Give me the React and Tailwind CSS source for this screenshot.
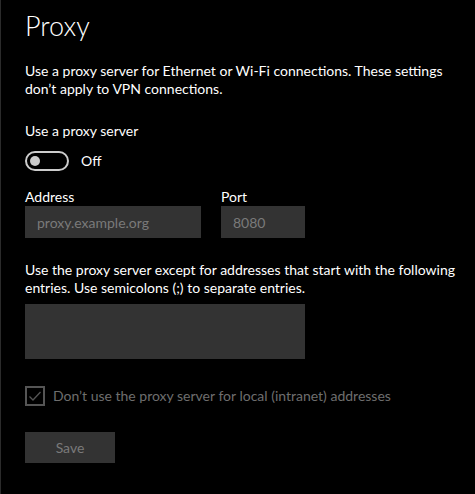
import React from 'react';

// Windows 10 style proxy settings page
const Toggle = () => (
  <div className="flex items-center gap-3">
    <div className="w-[44px] h-[20px] rounded-full border-2 border-[#cccccc] flex items-center px-[3px]">
      <div className="w-[10px] h-[10px] rounded-full bg-[#cccccc]" />
    </div>
    <span className="text-[14px] text-white">Off</span>
  </div>
);

const Field = ({ label, placeholder, width }) => (
  <div className="flex flex-col">
    <label className="text-[14px] text-white leading-[18px] h-[18px]">{label}</label>
    <div className={`${width} h-[32px] bg-[#333333] flex items-center px-3 text-[14px] text-[#7a7a7a]`}>
      {placeholder}
    </div>
  </div>
);

export default function App() {
  return (
    <div className="w-[475px] h-[494px] bg-black border-l border-[#2b2b2b] pl-6 pr-[12px] font-['Lato',sans-serif] overflow-hidden">
      <h1 className="text-[27px] font-light text-white leading-[36px] pt-[8px]">Proxy</h1>

      <p className="mt-[18px] text-[14px] leading-[18px] text-white">
        Use a proxy server for Ethernet or Wi-Fi connections. These settings don’t apply to VPN connections.
      </p>

      <div className="mt-[23px] text-[14px] leading-[20px] text-white">Use a proxy server</div>
      <div className="mt-[9px]">
        <Toggle />
      </div>

      <div className="mt-[17px] flex gap-5">
        <Field label="Address" placeholder="proxy.example.org" width="w-[176px]" />
        <Field label="Port" placeholder="8080" width="w-[84px]" />
      </div>

      <p className="mt-[23px] text-[14px] leading-[18px] text-white">
        Use the proxy server except for addresses that start with the following entries. Use semicolons (;) to separate entries.
      </p>

      <div className="mt-[7px] w-[280px] h-[55px] bg-[#333333]" />

      <div className="mt-[27px] flex items-center gap-2">
        <div className="w-[20px] h-[20px] border-2 border-[#555555] flex items-center justify-center">
          <svg width="14" height="14" viewBox="0 0 14 14" fill="none">
            <path d="M1.5 7.5 L5 11 L12.5 3" stroke="#555555" strokeWidth="1.3" />
          </svg>
        </div>
        <span className="text-[14px] leading-[20px] text-[#6e6e6e]">Don’t use the proxy server for local (intranet) addresses</span>
      </div>

      <button className="mt-[26px] w-[90px] h-[31px] bg-[#333333] text-[14px] text-[#7a7a7a]">Save</button>
    </div>
  );
}
